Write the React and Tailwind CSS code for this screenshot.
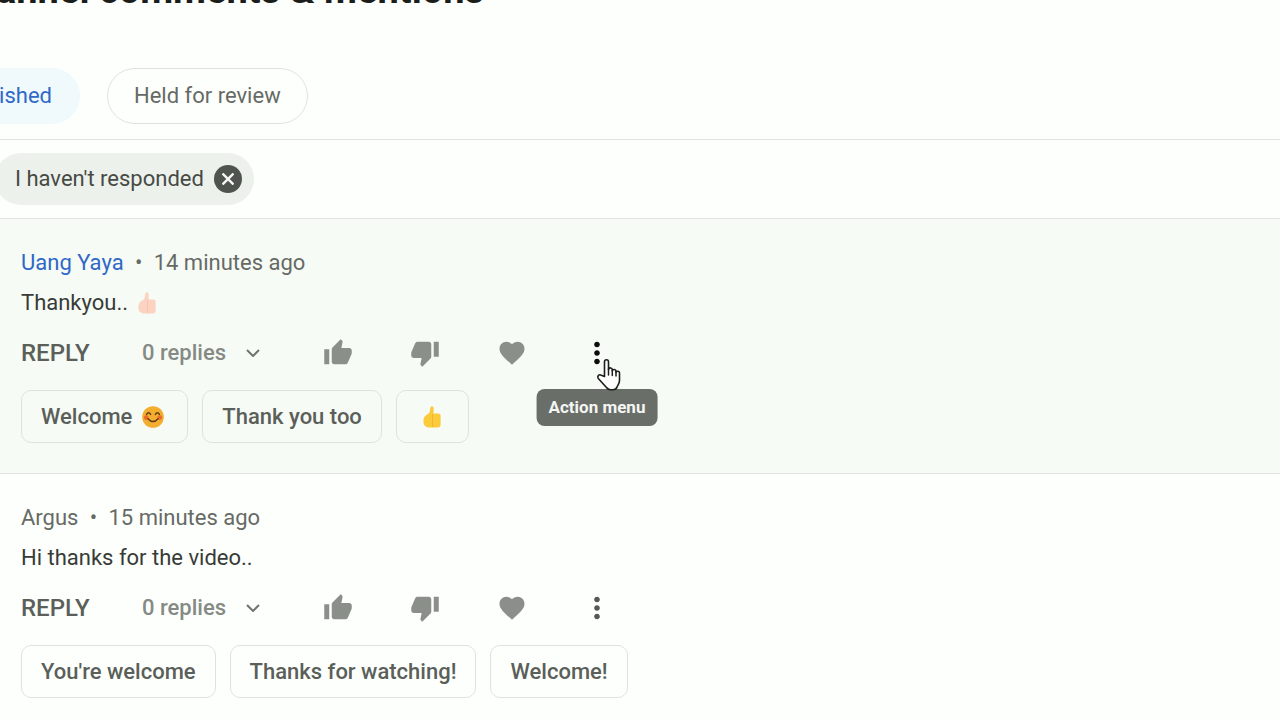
import React from "react";
import { MdThumbUp, MdThumbDown, MdFavorite, MdMoreVert } from "react-icons/md";

const SmileEmoji = () => (
  <svg className="w-[22px] h-[22px] mr-1" viewBox="0 0 22 22" role="img" aria-label="smile">
    <circle cx="11" cy="11" r="10.8" fill="#f3ae30" />
    <circle cx="4.2" cy="11.6" r="2.4" fill="#ee6a2c" />
    <circle cx="17.8" cy="11.6" r="2.4" fill="#ee6a2c" />
    <g fill="none" stroke="#5c3a16" strokeWidth="1.5" strokeLinecap="round">
      <path d="M4.6 8.4q2-3.2 4 0" />
      <path d="M13.4 8.4q2-3.2 4 0" />
      <path d="M6 12.8q5 5.6 10 0" />
    </g>
  </svg>
);

const ThumbEmoji = ({ light }) => (
  <svg className="w-[18px] h-[22px]" viewBox="0 0 18 22" role="img" aria-label="thumbs up">
    <path
      d="M8.6.4c1.2-.2 2.1.7 2.1 2.2l-.1 4.8 4.6.2c1.7.1 2.5 1 2.4 2.3v8.8c0 1.8-1 2.8-2.8 2.8H6.2C2.6 21.5.4 19 .4 15.500c0-3.600 1.300-5.700 3.800-6.900 1.900-1 2.800-2.600 2.900-5.600C7.100 1.500 7.600.6 8.600.4z"
      fill={light ? "#fbd3c0" : "#fbcb3c"}
    />
    <path
      d="M9.5 8v13"
      fill="none"
      stroke={light ? "#f5c4af" : "#efb62e"}
      strokeWidth="1"
    />
  </svg>
);

const HandCursor = () => (
  <svg
    className="absolute left-3 top-[22px] z-20 w-[26px] h-[34px] pointer-events-none"
    viewBox="0 0 26 34"
  >
    <path
      d="M8.5 18.5V4c0-3 4-3 4 0v7.5c.4-2.3 3.8-2 3.8.3v1c.5-2 3.7-1.7 3.7.5v1c.6-1.7 3.5-1.3 3.5.8v7.4c0 3-1.8 4.5-2.5 6.5-.5 1.8-2 2.7-4 2.7h-2.5c-2 0-3-.6-4-2.2L2.3 20.5c-1.6-2.6 1-4.6 3-3.2z"
      fill="#fff"
      stroke="#1c1e1b"
      strokeWidth="1.6"
      strokeLinejoin="round"
    />
    <path
      d="M12.5 11v6M16.3 12.5V17.5M20 13.5V18"
      fill="none"
      stroke="#1c1e1b"
      strokeWidth="1.5"
      strokeLinecap="round"
    />
  </svg>
);

const comments = [
  {
    author: "Uang Yaya",
    time: "14 minutes ago",
    text: "Thankyou..",
    emoji: <ThumbEmoji light />,
    active: true,
    replies: [
      { text: "Welcome", emoji: <SmileEmoji /> },
      { text: "Thank you too" },
      { emoji: <ThumbEmoji /> },
    ],
  },
  {
    author: "Argus",
    time: "15 minutes ago",
    text: "Hi thanks for the video..",
    replies: [
      { text: "You're welcome" },
      { text: "Thanks for watching!" },
      { text: "Welcome!" },
    ],
  },
];

const Comment = ({ comment }) => {
  const { author, time, text, emoji, active, replies } = comment;

  return (
    <article
      className={`pl-[21px] pt-6 pb-[30px] border-b border-[#e0e4df] ${
        active ? "bg-[#f7fbf6]" : ""
      }`}
    >
      <div className="flex items-center h-10 text-[#666a65]">
        <a href="#author" className={active ? "text-[#2f68c8]" : ""}>
          {author}
        </a>
        <span className="w-[30px] text-center">•</span>
        <span>{time}</span>
      </div>

      <p className="flex items-center gap-[10px] h-10 text-[#383b37]">
        {text}
        {emoji}
      </p>

      <div className="flex items-center h-[59px] font-medium">
        <button className="w-[121px] text-left text-2xl text-[#5b5f5a]">REPLY</button>
        <button className="flex items-center gap-5 w-[181px] text-[#868a85]">
          0 replies
          <svg className="w-[14px] h-2" viewBox="0 0 14 8" fill="none" stroke="#70746f" strokeWidth="2">
            <path d="M1 1l6 6 6-6" />
          </svg>
        </button>
        <div className="flex items-center gap-[57px] text-[#8a8f89]">
          <button aria-label="Like">
            <MdThumbUp size={30} />
          </button>
          <button aria-label="Dislike">
            <MdThumbDown size={30} />
          </button>
          <button aria-label="Heart">
            <MdFavorite size={30} />
          </button>
          <div className="relative">
            <button
              aria-label="Action menu"
              className={`flex justify-center w-[26px] ${
                active ? "text-[#0c0e0b]" : "text-[#555954]"
              }`}
            >
              <MdMoreVert size={34} className="shrink-0" />
            </button>
            {active && (
              <>
                <span
                  role="tooltip"
                  className="absolute left-1/2 top-[53px] z-10 -translate-x-1/2 rounded-lg bg-[#6a6e69] px-3 h-[37px] leading-[37px] text-[17px] font-bold text-[#f4f6f3] whitespace-nowrap"
                >
                  Action menu
                </span>
                <HandCursor />
              </>
            )}
          </div>
        </div>
      </div>

      <div className="flex gap-[14px] mt-2 font-medium text-[#5b5f5a]">
        {replies.map((reply, i) => (
          <button
            key={i}
            className="flex items-center justify-center gap-[10px] h-[53px] min-w-[73px] px-[19px] rounded-[10px] border border-[#dfe3de]"
          >
            {reply.text}
            {reply.emoji}
          </button>
        ))}
      </div>
    </article>
  );
};

const App = () => {
  return (
    <main className="h-screen overflow-hidden bg-[#fdfffc] font-['Roboto',sans-serif] text-[22px] leading-7">
      <header className="border-b border-[#e0e4df] pb-[15px]">
        <div className="flex items-end justify-end w-[484px] h-[10px]">
          <h1 className="shrink-0 whitespace-nowrap text-[38px] leading-10 font-bold text-[#1b1d1a]">
            Channel comments & mentions
          </h1>
        </div>
        <nav className="flex gap-[27px] mt-[58px]">
          <div className="flex justify-end w-20">
            <button className="shrink-0 h-14 px-7 rounded-full bg-[#f0f9fb] text-[#2f68c8]">
              Published
            </button>
          </div>
          <button className="h-14 px-[26px] rounded-full border border-[#dfe3de] text-[#666a65]">
            Held for review
          </button>
        </nav>
      </header>

      <div className="flex items-center h-[79px] border-b border-[#e0e4df]">
        <div className="flex items-center gap-[10px] h-[52px] -ml-[5px] pl-5 pr-3 rounded-full bg-[#edf1ec] text-[#464a45]">
          I haven't responded
          <button
            aria-label="Remove filter"
            className="flex items-center justify-center w-7 h-7 rounded-full bg-[#50544f]"
          >
            <svg className="w-3 h-3" viewBox="0 0 12 12" stroke="#f4f6f3" strokeWidth="2.4">
              <path d="M0.5 0.5l11 11M11.5 0.5l-11 11" />
            </svg>
          </button>
        </div>
      </div>

      {comments.map((comment) => (
        <Comment key={comment.author} comment={comment} />
      ))}
    </main>
  );
};

export default App;
